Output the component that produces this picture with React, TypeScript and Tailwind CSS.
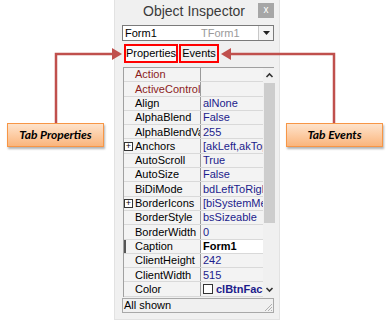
import React from 'react';

type Prop = {
  name: string;
  value: string;
  red?: boolean;
  plus?: boolean;
  selected?: boolean;
  swatch?: boolean;
};

const PROPS: Prop[] = [
  { name: 'Action', value: '', red: true },
  { name: 'ActiveControl', value: '', red: true },
  { name: 'Align', value: 'alNone' },
  { name: 'AlphaBlend', value: 'False' },
  { name: 'AlphaBlendValue', value: '255' },
  { name: 'Anchors', value: '[akLeft,akTop]', plus: true },
  { name: 'AutoScroll', value: 'True' },
  { name: 'AutoSize', value: 'False' },
  { name: 'BiDiMode', value: 'bdLeftToRight' },
  { name: 'BorderIcons', value: '[biSystemMenu,biMinimize]', plus: true },
  { name: 'BorderStyle', value: 'bsSizeable' },
  { name: 'BorderWidth', value: '0' },
  { name: 'Caption', value: 'Form1', selected: true },
  { name: 'ClientHeight', value: '242' },
  { name: 'ClientWidth', value: '515' },
  { name: 'Color', value: 'clBtnFace', swatch: true },
];

const Callout: React.FC<{ label: string }> = ({ label }) => (
  <div className="w-[97px] h-[24px] flex items-center justify-center border border-[#f79646] bg-gradient-to-b from-[#fde3cb] to-[#fab57c] shadow-[1px_2px_2px_rgba(0,0,0,0.3)]">
    <span className="text-[12px] font-bold italic text-black" style={{ fontFamily: 'Lato, "Open Sans", sans-serif' }}>
      {label}
    </span>
  </div>
);

const Row: React.FC<{ p: Prop }> = ({ p }) => (
  <div className="flex h-[14.3px] border-b border-[#d9d9d9]">
    <div
      className={
        'w-[76px] shrink-0 flex items-center overflow-hidden whitespace-nowrap ' +
        (p.selected ? 'border-l-2 border-[#555] pl-[9px]' : p.plus ? 'pl-0' : 'pl-[11px]') +
        (p.red ? ' text-[#8b1c1c]' : ' text-black')
      }
    >
      {p.plus && (
        <span className="w-[9px] h-[9px] mr-[2px] border border-[#333] bg-white flex items-center justify-center text-[9px] leading-none shrink-0">
          +
        </span>
      )}
      {p.name}
    </div>
    <div className="w-px shrink-0 bg-[#9a9a9a]" />
    <div
      className={
        'w-[62px] shrink-0 flex items-center pl-[2px] overflow-hidden whitespace-nowrap ' +
        (p.selected ? 'bg-white text-black font-bold' : 'text-[#1c1c8c]')
      }
    >
      {p.swatch && <span className="w-[10px] h-[10px] border border-[#333] bg-white mr-[3px] shrink-0" />}
      <span className={p.swatch ? 'font-bold' : ''}>{p.value}</span>
    </div>
  </div>
);

const App: React.FC = () => {
  return (
    <div
      className="relative w-[390px] h-[326px] bg-white flex overflow-hidden text-[11px]"
      style={{ fontFamily: '"Liberation Sans", Arial, sans-serif' }}
    >
      <div className="w-[114px] shrink-0 pt-[123px] pl-[7px]">
        <Callout label="Tab Properties" />
      </div>

      <div className="w-[166px] shrink-0 h-[320px] bg-[#f0f0f0] border-x border-b border-[#e2e2e2] flex flex-col pl-[7px] pr-[5px]">
        <div className="h-[25px] flex items-start pt-[3px]">
          <div className="flex-1 text-center text-[14px] text-[#3a3a3a] pl-[8px] leading-[16px]">Object Inspector</div>
          <div className="w-[16px] h-[15px] bg-[#a6a6a6] text-white text-[10px] leading-[14px] text-center">x</div>
        </div>

        <div className="h-[16px] bg-white border border-[#7a7a7a] flex items-center">
          <span className="w-[78px] pl-[2px] text-black">Form1</span>
          <span className="flex-1 text-[#9a9a9a]">TForm1</span>
          <span className="w-[15px] h-full border-l border-[#c8c8c8] bg-[#f4f4f4] flex items-center justify-center">
            <svg width="7" height="4" viewBox="0 0 7 4">
              <path d="M0 0h7L3.5 4z" fill="#222" />
            </svg>
          </span>
        </div>

        <div className="h-[26px] flex items-start pt-[3px]">
          <div className="w-[54px] h-[19px] ml-[2px] border-2 border-[#ff0000] bg-[#fafafa] flex items-center justify-center text-black">
            Properties
          </div>
          <div className="w-[40px] h-[19px] ml-px border-2 border-[#ff0000] flex items-center justify-center text-black">
            Events
          </div>
        </div>

        <div className="h-[230px] flex border-l border-t border-[#a0a0a0] bg-[#f3f3f3] ml-px">
          <div className="flex flex-col">
            {PROPS.map((p) => (
              <Row key={p.name} p={p} />
            ))}
          </div>
          <div className="w-[13px] shrink-0 bg-[#f0f0f0] flex flex-col items-center">
            <svg width="9" height="14" viewBox="0 0 9 14" className="shrink-0">
              <path d="M1.5 9l3-3 3 3" stroke="#333" strokeWidth="1.6" fill="none" />
            </svg>
            <div className="w-[11px] h-[140px] bg-[#cdcdcd] mt-[1px]" />
            <div className="flex-1" />
            <svg width="9" height="14" viewBox="0 0 9 14" className="shrink-0">
              <path d="M1.5 5l3 3 3-3" stroke="#333" strokeWidth="1.6" fill="none" />
            </svg>
          </div>
        </div>

        <div className="h-[15px] mt-[1px] border border-[#a8a8a8] flex items-center justify-between">
          <span className="pl-px text-black">All shown</span>
          <svg width="10" height="10" viewBox="0 0 10 10" className="self-end">
            <path d="M9 2L2 9M9 5L5 9M9 8L8 9" stroke="#b0b0b0" strokeWidth="1" />
          </svg>
        </div>
      </div>

      <div className="flex-1 pt-[123px] pl-[6px]">
        <Callout label="Tab Events" />
      </div>

      <svg className="absolute inset-0 pointer-events-none" width="390" height="326" viewBox="0 0 390 326">
        <path d="M56 123V54H113" stroke="#c0504d" strokeWidth="2.5" fill="none" />
        <path d="M122 54l-10-6v12z" fill="#c0504d" />
        <path d="M334 123V54H230" stroke="#c0504d" strokeWidth="2.5" fill="none" />
        <path d="M221 54l10-6v12z" fill="#c0504d" />
      </svg>
    </div>
  );
};

export default App;
